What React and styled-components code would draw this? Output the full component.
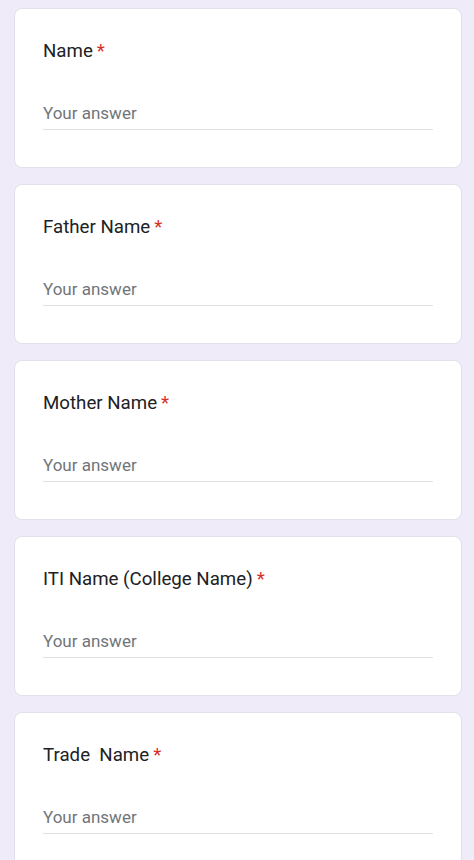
import React from 'react'
import styled, { createGlobalStyle } from 'styled-components'

const GlobalStyle = createGlobalStyle`
  html, body {
    margin: 0;
    padding: 0;
    background: #f0ebf8;
  }
  body {
    font-family: Roboto, "Noto Sans", Arial, sans-serif;
  }
`

const questions = [
  'Name',
  'Father Name',
  'Mother Name',
  'ITI Name (College Name)',
  'Trade  Name',
]

const App = () => {
  return (
    <>
      <GlobalStyle />
      <Page>
        {questions.map((q) => (
          <Card key={q}>
            <Title>
              {q}
              <Required>*</Required>
            </Title>
            <Answer type="text" placeholder="Your answer" />
          </Card>
        ))}
      </Page>
    </>
  )
}

const Page = styled.div`
  display: flex;
  flex-direction: column;
  gap: 16px;
  padding: 8px 12px 16px 14px;
  background: #f0ebf8;
  min-height: 860px;
  box-sizing: border-box;
`

const Card = styled.div`
  display: flex;
  flex-direction: column;
  background: #fff;
  border: 1px solid #e4dfec;
  border-radius: 8px;
  padding: 30px 28px 37px 28px;
  box-sizing: border-box;
  height: 160px;
`

const Title = styled.div`
  font-size: 18.7px;
  line-height: 24px;
  color: #202124;
  white-space: pre;
`

const Required = styled.span`
  color: #d93025;
  margin-left: 4px;
`

const Answer = styled.input`
  margin-top: 40px;
  width: 100%;
  box-sizing: border-box;
  border: none;
  border-bottom: 1px solid #e0e0e0;
  padding: 0 0 6px 0;
  font-family: inherit;
  font-size: 17px;
  line-height: 20px;
  height: 27px;
  color: #202124;
  background: transparent;
  outline: none;
  &::placeholder {
    color: #70757a;
  }
`

export default App
